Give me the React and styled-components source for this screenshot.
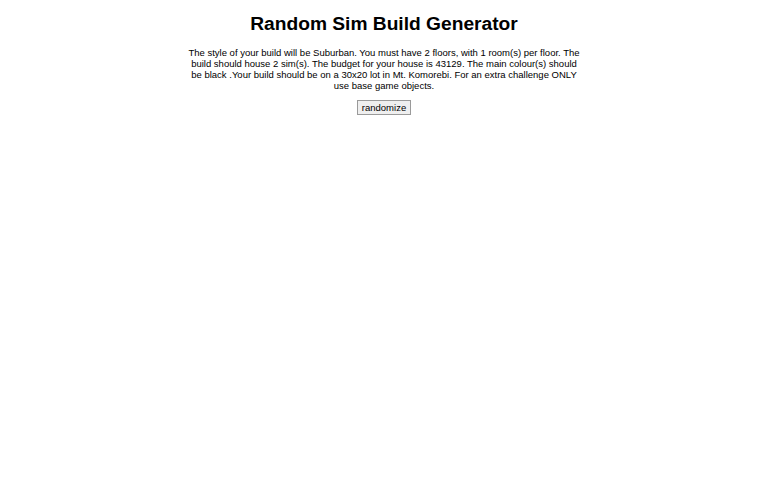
import React from 'react'
import styled, { createGlobalStyle } from 'styled-components'

const GlobalStyle = createGlobalStyle`
  body {
    margin: 0;
    background: #fff;
    font-family: "Liberation Sans", Arial, sans-serif;
    color: #000;
  }
`

const Page = styled.div`
  display: flex;
  flex-direction: column;
  align-items: center;
  padding-top: 13px;
`

const Title = styled.h1`
  font-size: 19.2px;
  font-weight: bold;
  margin: 0 0 12px;
`

const Description = styled.p`
  font-size: 9.5px;
  line-height: 11px;
  max-width: 395px;
  text-align: center;
  margin: 0 0 9px;
`

const Button = styled.button`
  font-family: "Liberation Sans", Arial, sans-serif;
  font-size: 9.5px;
  padding: 1px 4px;
  background: #efefef;
  border: 1px solid #9a9a9a;
  border-radius: 0;
  color: #000;
`

export default function App() {
  return (
    <>
      <GlobalStyle />
      <Page>
        <Title>Random Sim Build Generator</Title>
        <Description>
          The style of your build will be Suburban. You must have 2 floors, with 1 room(s) per floor. The build should house 2 sim(s). The budget for your house is 43129. The main colour(s) should be black .Your build should be on a 30x20 lot in Mt. Komorebi. For an extra challenge ONLY use base game objects.
        </Description>
        <Button>randomize</Button>
      </Page>
    </>
  )
}
